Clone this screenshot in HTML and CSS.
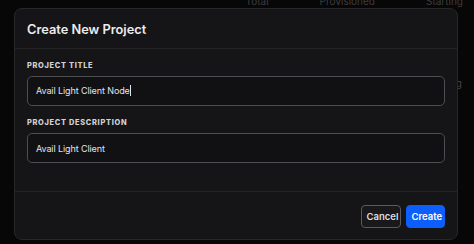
FILE: index.html
```html
<!DOCTYPE html>
<html lang="en">
<head>
<meta charset="utf-8">
<title>Create New Project</title>
<link rel="stylesheet" href="styles.css">
</head>
<body>
<div class="backdrop">
  <div class="bg-row bg-head">
    <span>Total</span>
    <span>Provisioned</span>
    <span>Starting</span>
  </div>
  <div class="bg-row bg-data">
    <span>Running</span>
  </div>
</div>

<div class="modal" role="dialog" aria-labelledby="modal-title">
  <div class="modal-header">
    <h2 id="modal-title" class="modal-title">Create New Project</h2>
  </div>
  <div class="modal-body">
    <div class="field">
      <label class="field-label">PROJECT TITLE</label>
      <div class="field-input">Avail Light Client Node<span class="caret"></span></div>
    </div>
    <div class="field field-second">
      <label class="field-label">PROJECT DESCRIPTION</label>
      <div class="field-input">Avail Light Client</div>
    </div>
  </div>
  <div class="modal-footer">
    <button class="btn btn-cancel" type="button">Cancel</button>
    <button class="btn btn-create" type="button">Create</button>
  </div>
</div>
</body>
</html>
```

FILE: styles.css
```css
html, body {
  margin: 0;
  padding: 0;
}

body {
  width: 474px;
  height: 244px;
  overflow: hidden;
  background: #070707;
  font-family: Inter, "Noto Sans", sans-serif;
  position: relative;
}

.backdrop {
  color: #3c3c3e;
  font-size: 10px;
  line-height: 12px;
}

.bg-row {
  display: flex;
  justify-content: flex-end;
  gap: 51px;
  padding-right: 11px;
}

.bg-head {
  margin-top: -5px;
}

.bg-data {
  margin-top: 70px;
  padding-right: 12px;
  color: #464648;
}

.modal {
  position: absolute;
  left: 14px;
  top: 8px;
  width: 444px;
  height: 232px;
  box-sizing: border-box;
  background: #151517;
  border: 1px solid #28282b;
  border-radius: 8px;
  display: flex;
  flex-direction: column;
}

.modal-header {
  height: 40px;
  box-sizing: border-box;
  border-bottom: 1px solid #232326;
  padding: 12.5px 12px 0;
}

.modal-title {
  margin: 0;
  font-size: 12.8px;
  line-height: 16px;
  font-weight: 600;
  color: #ececee;
}

.modal-body {
  padding: 11.5px 12px 28px;
  border-bottom: 1px solid #232326;
}

.field {
  display: flex;
  flex-direction: column;
}

.field-second {
  margin-top: 12.5px;
}

.field-label {
  font-size: 7.4px;
  line-height: 10px;
  font-weight: 800;
  letter-spacing: 0.7px;
  color: #d2d2d6;
}

.field-input {
  margin-top: 5px;
  height: 30px;
  box-sizing: border-box;
  border: 1px solid #4d4d52;
  border-radius: 5px;
  background: #111113;
  padding: 0 8px;
  display: flex;
  align-items: center;
  font-size: 9px;
  letter-spacing: -0.1px;
  color: #e4e4e7;
}

.caret {
  display: inline-block;
  width: 1px;
  height: 11px;
  background: #e4e4e7;
  margin-left: 0.5px;
}

.modal-footer {
  flex: 1;
  display: flex;
  justify-content: flex-end;
  align-items: flex-start;
  gap: 5px;
  padding: 12.5px 12px 0;
}

.btn {
  height: 23px;
  box-sizing: border-box;
  border-radius: 4px;
  font-family: Inter, "Noto Sans", sans-serif;
  font-size: 9.5px;
  font-weight: 600;
  padding: 0 5px;
  cursor: pointer;
}

.btn-cancel {
  width: 40px;
  background: #19191b;
  border: 1px solid #5a5a5f;
  color: #dedee2;
}

.btn-create {
  width: 39.5px;
  background: #0d5ffd;
  border: 1px solid #0d5ffd;
  color: #ffffff;
}
```
